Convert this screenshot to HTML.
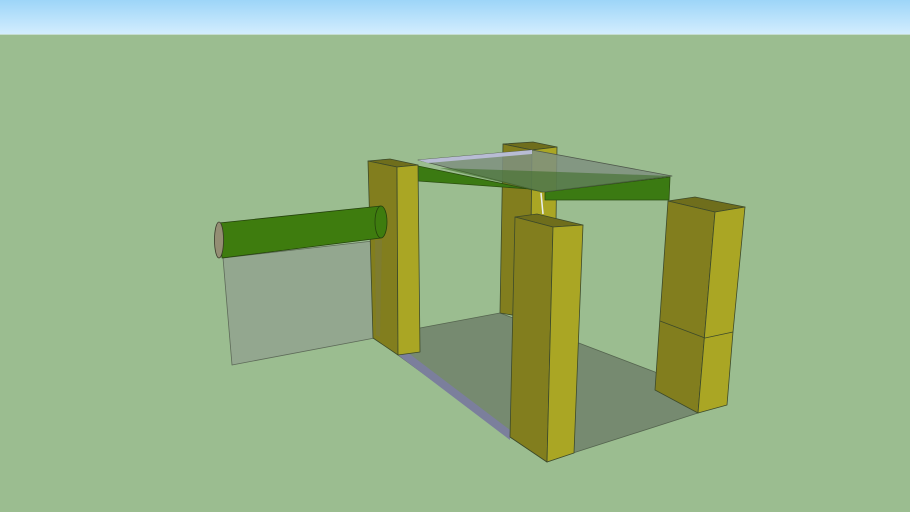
<!DOCTYPE html>
<html><head><style>
html,body{margin:0;padding:0;width:910px;height:512px;overflow:hidden;background:#9bbd90}
svg{display:block}
</style></head><body>
<svg width="910" height="512" viewBox="0 0 910 512" xmlns="http://www.w3.org/2000/svg">
<defs>
<linearGradient id="sky" x1="0" y1="0" x2="0" y2="1">
<stop offset="0" stop-color="#9dd5f8"/><stop offset="1" stop-color="#d4eefe"/>
</linearGradient>
</defs>
<rect x="0" y="0" width="910" height="35" fill="url(#sky)"/>
<rect x="0" y="34" width="910" height="1" fill="#c5ddd0"/>
<rect x="0" y="35" width="910" height="477" fill="#9bbd90"/>
<g stroke="#3d4a2a" stroke-width="0.8" stroke-linejoin="round">
<!-- floor -->
<polygon points="398,355 420,328 500,313 655,372 698,413 573,453 547,462 510,437" fill="#768a70" stroke="#55654f"/>
<polygon points="398,355 407,352 510,430 510,440" fill="#7b7f9c" stroke="none"/>
<!-- back pillar -->
<polygon points="503,144 533,142 557,147 532,150" fill="#6f6e1c"/>
<polygon points="503,144 532,150 530,318 500,313" fill="#827e1e"/>
<polygon points="532,150 557,147 555,300 530,318" fill="#aaa624"/>
<!-- glass top -->
<polygon points="418,166 543,192 530,189 418,181" fill="#3b7a12" stroke="#2b4e10"/>
<polygon points="545,192 670,177 669,200 545,200" fill="#3b7a12" stroke="#2b4e10"/>
<polygon points="418,160 532,150 672,176 543,192" fill="#7f9180" fill-opacity="0.85" stroke="#505a4c"/>
<polygon points="418,160 532,150 532,154 428,163" fill="#b8bcd4" stroke="none"/>
<polygon points="440,168 543,192 672,176 560,172" fill="#3f6e2a" fill-opacity="0.6" stroke="none"/>
<line x1="541" y1="193" x2="543" y2="214" stroke="#e8eef0" stroke-width="1.5"/>
<!-- left panel -->
<polygon points="223,258 382,240 380,337 232,365" fill="#93a78f" stroke="#5d6a58"/>
<!-- left pillar -->
<polygon points="368,161 390,159 418,165 397,167" fill="#6f6e1c"/>
<polygon points="368,161 397,167 398,355 373,338" fill="#827e1e"/>
<polygon points="397,167 418,165 420,352 398,355" fill="#aaa624"/>
<polygon points="375,240 382,240 380,337 376,335" fill="#7a7a40" fill-opacity="0.5" stroke="none"/>
<!-- cylinder -->
<polygon points="219,223 381,206 381,238 222,258" fill="#3e7c0e" stroke="#24420c"/>
<ellipse cx="381" cy="222" rx="6" ry="16" fill="#3e7c0e" stroke="#24420c"/>
<ellipse cx="219" cy="240" rx="4.5" ry="18" fill="#948e74" stroke="#3a3a2a"/>
<!-- front pillar -->
<polygon points="515,217 537,214 583,225 553,227" fill="#6f6e1c"/>
<polygon points="515,217 553,227 547,462 510,437" fill="#827e1e"/>
<polygon points="553,227 583,225 574,453 547,462" fill="#aaa624"/>
<!-- right pillar -->
<polygon points="668,201 695,197 745,207 715,212" fill="#6f6e1c"/>
<polygon points="668,201 715,212 698,413 655,390" fill="#827e1e"/>
<polygon points="715,212 745,207 733,332 727,405 698,413" fill="#aaa624"/>
<polyline points="660,321 705,338 733,332" fill="none"/>
</g>
</svg>
</body></html>
